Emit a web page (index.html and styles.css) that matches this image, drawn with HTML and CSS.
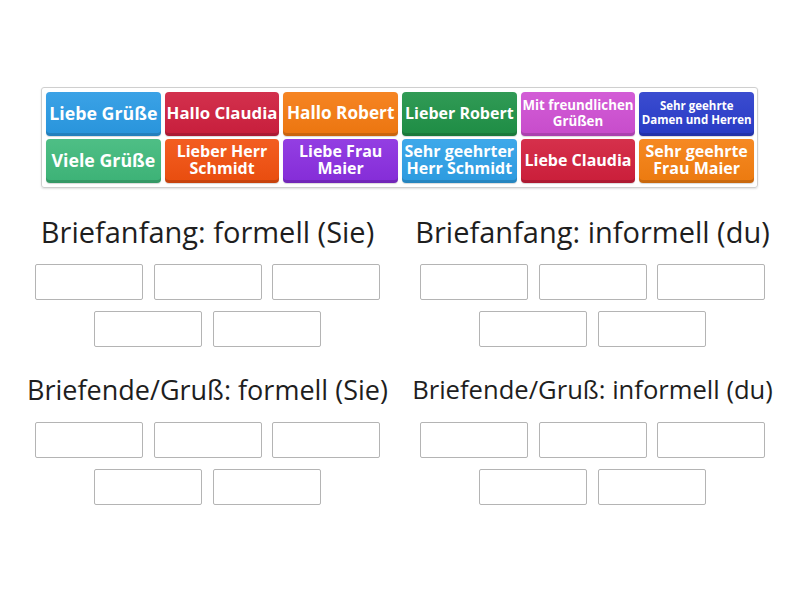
FILE: index.html
```html
<!DOCTYPE html>
<html lang="de">
<head>
<meta charset="utf-8">
<title>Gruppensortierung</title>
<link rel="stylesheet" href="styles.css">
</head>
<body>
<div class="page">
  <div class="bank">
    <div class="tile blue fs18">Liebe Grüße</div>
    <div class="tile crimson fs168">Hallo Claudia</div>
    <div class="tile orange fs17">Hallo Robert</div>
    <div class="tile green fs16">Lieber Robert</div>
    <div class="tile orchid small">Mit freundlichen Grüßen</div>
    <div class="tile royal tiny">Sehr geehrte Damen und Herren</div>
    <div class="tile mint fs18">Viele Grüße</div>
    <div class="tile tangerine two">Lieber Herr Schmidt</div>
    <div class="tile violet two">Liebe Frau Maier</div>
    <div class="tile sky two">Sehr geehrter Herr Schmidt</div>
    <div class="tile red fs16">Liebe Claudia</div>
    <div class="tile amber two">Sehr geehrte Frau Maier</div>
  </div>

  <div class="groups">
    <section class="group">
      <h2 class="title">Briefanfang: formell (Sie)</h2>
      <div class="slots">
        <div class="slot"></div><div class="slot"></div><div class="slot"></div>
        <div class="slot"></div><div class="slot"></div>
      </div>
    </section>
    <section class="group">
      <h2 class="title">Briefanfang: informell (du)</h2>
      <div class="slots">
        <div class="slot"></div><div class="slot"></div><div class="slot"></div>
        <div class="slot"></div><div class="slot"></div>
      </div>
    </section>
    <section class="group">
      <h2 class="title fit-a">Briefende/Gruß: formell (Sie)</h2>
      <div class="slots">
        <div class="slot"></div><div class="slot"></div><div class="slot"></div>
        <div class="slot"></div><div class="slot"></div>
      </div>
    </section>
    <section class="group">
      <h2 class="title fit-b">Briefende/Gruß: informell (du)</h2>
      <div class="slots">
        <div class="slot"></div><div class="slot"></div><div class="slot"></div>
        <div class="slot"></div><div class="slot"></div>
      </div>
    </section>
  </div>
</div>
</body>
</html>
```

FILE: styles.css
```css
* { box-sizing: border-box; }

html, body {
  margin: 0;
  padding: 0;
  background: #ffffff;
}

body {
  font-family: "Open Sans", "Noto Sans", "DejaVu Sans", sans-serif;
  color: #1e1e1e;
  width: 800px;
  height: 600px;
  overflow: hidden;
}

.page {
  padding-top: 87px;
}

.bank {
  margin-left: 41px;
  width: 717px;
  border: 1px solid #cfcfcf;
  border-radius: 3px;
  box-shadow: 0 1px 2px rgba(0, 0, 0, 0.12);
  padding: 4px 3px 4px 4px;
  display: grid;
  grid-template-columns: repeat(6, 1fr);
  column-gap: 4px;
  row-gap: 3px;
}

.tile {
  height: 44px;
  border-radius: 4px;
  color: #ffffff;
  font-weight: 700;
  font-size: 17px;
  line-height: 18px;
  display: flex;
  align-items: center;
  justify-content: center;
  text-align: center;
  padding: 0 1px 3px;
  box-shadow: inset 0 -3px 0 rgba(0, 0, 0, 0.14), 0 1px 1px rgba(0, 0, 0, 0.15);
  background-image: linear-gradient(to bottom, rgba(255, 255, 255, 0.08), rgba(0, 0, 0, 0.04));
}

.tile.fs18 { font-size: 17.8px; white-space: nowrap; }
.tile.fs17 { font-size: 17.2px; white-space: nowrap; }
.tile.fs168 { font-size: 16.8px; white-space: nowrap; }
.tile.fs16 { font-size: 16px; white-space: nowrap; }

.tile.two {
  font-size: 16px;
  line-height: 17px;
}

.tile.small {
  font-size: 13.3px;
  line-height: 16px;
}

.tile.tiny {
  font-size: 11.5px;
  line-height: 14px;
}

.blue      { background-color: #2a9ae4; }
.crimson   { background-color: #cf1f3e; }
.orange    { background-color: #f57a10; }
.green     { background-color: #1f9247; }
.orchid    { background-color: #cf4fd3; }
.royal     { background-color: #2a3dcc; }
.mint      { background-color: #3fb97b; }
.tangerine { background-color: #f2500f; }
.violet    { background-color: #8a2ee0; }
.sky       { background-color: #2ea1e8; }
.red       { background-color: #d21f3c; }
.amber     { background-color: #f57f10; }

.groups {
  margin-top: 26px;
  margin-left: 15px;
  width: 770px;
  display: grid;
  grid-template-columns: 385px 385px;
  row-gap: 25px;
}

.group {
  display: flex;
  flex-direction: column;
  align-items: center;
}

.title {
  margin: 0;
  font-size: 29px;
  font-weight: 400;
  line-height: 36px;
  height: 36px;
  color: #1e1e1e;
  white-space: nowrap;
}

.title.fit-a { font-size: 27px; }
.title.fit-b { font-size: 25.6px; }

.slots {
  margin-top: 14px;
  width: 346px;
  display: flex;
  flex-wrap: wrap;
  justify-content: center;
  column-gap: 10.5px;
  row-gap: 11px;
}

.slot {
  width: 108px;
  height: 36px;
  border: 1px solid #b4b4b4;
  border-radius: 2px;
  background: #ffffff;
}
```
